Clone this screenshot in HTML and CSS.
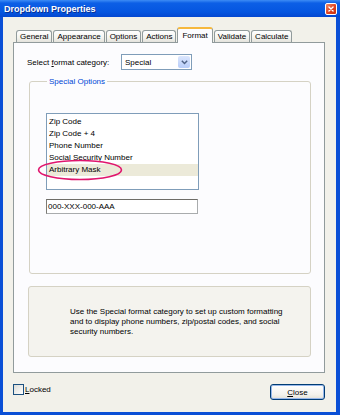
FILE: index.html
```html
<!DOCTYPE html>
<html lang="en">
<head>
  <meta charset="UTF-8">
  <title>Dropdown Properties</title>
  <link rel="stylesheet" href="styles.css">
</head>
<body>

  <div class="window">
    <!-- Title bar -->
    <div class="titlebar">
      <span class="title">Dropdown Properties</span>
      <span class="close-x">
        <svg width="12" height="12" viewBox="0 0 12 12">
          <path d="M3.5 3.5 L8.5 8.5 M8.5 3.5 L3.5 8.5" stroke="#fff" stroke-width="1.6" stroke-linecap="round"/>
        </svg>
      </span>
    </div>

    <div class="client">
      <!-- Tabs -->
      <div class="tabs">
        <div class="tab">General</div>
        <div class="tab">Appearance</div>
        <div class="tab">Options</div>
        <div class="tab">Actions</div>
        <div class="tab active">Format</div>
        <div class="tab">Validate</div>
        <div class="tab">Calculate</div>
      </div>

      <div class="panel">
        <div class="category-row">
          <label>Select <u>f</u>ormat category:</label>
          <div class="select">
            <span class="select-value">Special</span>
            <span class="select-arrow">
              <svg width="7" height="5" viewBox="0 0 7 5">
                <path d="M0.8 0.8 L3.5 3.6 L6.2 0.8" fill="none" stroke="#4d6185" stroke-width="1.4"/>
              </svg>
            </span>
          </div>
        </div>

        <fieldset class="group">
          <legend>Special Options</legend>
          <div class="listbox-wrap">
            <ul class="listbox">
              <li>Zip Code</li>
              <li>Zip Code + 4</li>
              <li>Phone Number</li>
              <li>Social Security Number</li>
              <li class="selected">Arbitrary Mask</li>
            </ul>
            <svg class="ring" width="86" height="22" viewBox="0 0 86 22">
              <ellipse cx="43" cy="11" rx="41.5" ry="9.5" fill="none" stroke="#e0156d" stroke-width="1.6"/>
            </svg>
          </div>
          <div class="mask-input">000-XXX-000-AAA</div>
        </fieldset>

        <div class="description">
          <p>Use the Special format category to set up custom formatting<br>
          and to display phone numbers, zip/postal codes, and social<br>
          security numbers.</p>
        </div>
      </div>

      <div class="footer">
        <label class="check"><span class="box"></span><span><u>L</u>ocked</span></label>
        <button class="close-btn"><u>C</u>lose</button>
      </div>
    </div>
  </div>

</body>
</html>
```

FILE: styles.css
```css
body {
  margin: 0;
  padding: 0;
  font-family: "Liberation Sans", Arial, sans-serif;
  font-size: 8px;
  color: #000;
}

.window {
  width: 340px;
  height: 415px;
  display: flex;
  flex-direction: column;
  background: #0a4fd6;
  box-sizing: border-box;
}

.titlebar {
  height: 17px;
  display: flex;
  align-items: center;
  justify-content: space-between;
  padding: 0 3px 0 4px;
  background: linear-gradient(#3d8cf5 0%, #0c5fe6 18%, #0556e0 70%, #0347d0 100%);
}

.title {
  color: #fff;
  font-weight: bold;
  font-size: 9px;
  text-shadow: 1px 1px 0 #0b2f8f;
}

.close-x {
  width: 12px;
  height: 12px;
  border: 1px solid #fff;
  border-radius: 2px;
  background: linear-gradient(135deg, #f08a6a, #e0421f 55%, #c5300f);
  display: flex;
  align-items: center;
  justify-content: center;
  box-sizing: border-box;
}

.client {
  flex: 1;
  margin: 0 4px 3px 3px;
  background: #f2f1ea;
  padding: 10px 11px 0 10px;
  display: flex;
  flex-direction: column;
}

/* Tabs */
.tabs {
  height: 15px;
  display: flex;
  align-items: flex-end;
  gap: 1px;
  padding-left: 3px;
}

.tab {
  height: 12px;
  line-height: 12px;
  padding: 0 3px;
  border: 1px solid #919b9c;
  border-bottom: none;
  border-radius: 3px 3px 0 0;
  background: linear-gradient(#ffffff, #f3f3ef 60%, #e4e3dc);
  box-sizing: border-box;
  position: relative;
}

.tab.active {
  height: 16px;
  line-height: 14px;
  padding: 0 4px;
  background: #fcfcfe;
  border-top: 2px solid #f6b83c;
  margin-bottom: -1px;
  z-index: 1;
}

.panel {
  height: 331px;
  border: 1px solid #919b9c;
  background: #fcfcfe;
  padding: 11px 13px 0 13px;
  box-sizing: border-box;
}

.category-row {
  display: flex;
  align-items: center;
  height: 16px;
}

.category-row label {
  width: 94px;
}

.select {
  width: 71px;
  height: 16px;
  border: 1px solid #7f9db9;
  background: #fff;
  display: flex;
  align-items: center;
  box-sizing: border-box;
}

.select-value {
  flex: 1;
  padding-left: 3px;
}

.select-arrow {
  width: 12px;
  height: 12px;
  margin-right: 1px;
  border-radius: 2px;
  background: linear-gradient(#dbe6fd, #b8cdf9);
  display: flex;
  align-items: center;
  justify-content: center;
}

/* Special Options group */
.group {
  margin: 7px 0 0 2px;
  padding: 27px 0 59px 16px;
  border: 1px solid #d5d2c4;
  border-radius: 3px;
}

.group legend {
  color: #0046d5;
  padding: 0 2px;
  margin-left: 1px;
}

.listbox-wrap {
  position: relative;
}

.listbox {
  list-style: none;
  margin: 0;
  padding: 2px 0 0 0;
  width: 153px;
  height: 77px;
  border: 1px solid #7f9db9;
  background: #fff;
  box-sizing: border-box;
}

.listbox li {
  height: 12px;
  line-height: 12px;
  padding-left: 2px;
}

.listbox li.selected {
  background: #ecead9;
}

.ring {
  position: absolute;
  left: -9px;
  top: 46px;
}

.mask-input {
  margin-top: 9px;
  width: 152px;
  height: 15px;
  line-height: 13px;
  padding-left: 1px;
  border: 1px solid #a9acad;
  border-top-color: #6e6d68;
  border-left-color: #7c7b76;
  background: #fff;
  box-sizing: border-box;
}

.description {
  margin: 12px 0 0 1px;
  height: 71px;
  border: 1px solid #d5d2c4;
  border-radius: 3px;
  background: #f4f3ee;
  display: flex;
  align-items: center;
  padding-left: 41px;
  box-sizing: border-box;
}

.description p {
  margin: 0;
  line-height: 10px;
}

/* Footer */
.footer {
  display: flex;
  justify-content: space-between;
  align-items: flex-start;
  padding-top: 11px;
}

.check {
  display: flex;
  align-items: center;
  gap: 1px;
  height: 11px;
}

.box {
  width: 11px;
  height: 11px;
  border: 1px solid #1c5180;
  background: linear-gradient(135deg, #dcdcd7, #fff);
  box-sizing: border-box;
}

.close-btn {
  width: 55px;
  height: 16px;
  margin: 0;
  padding: 0;
  font-family: inherit;
  font-size: 8px;
  border: 1px solid #003c74;
  border-radius: 3px;
  background: linear-gradient(#fff, #f3f2ec 70%, #e3e1d6);
  box-shadow: inset 0 0 0 1px #98b8ea;
}
```
